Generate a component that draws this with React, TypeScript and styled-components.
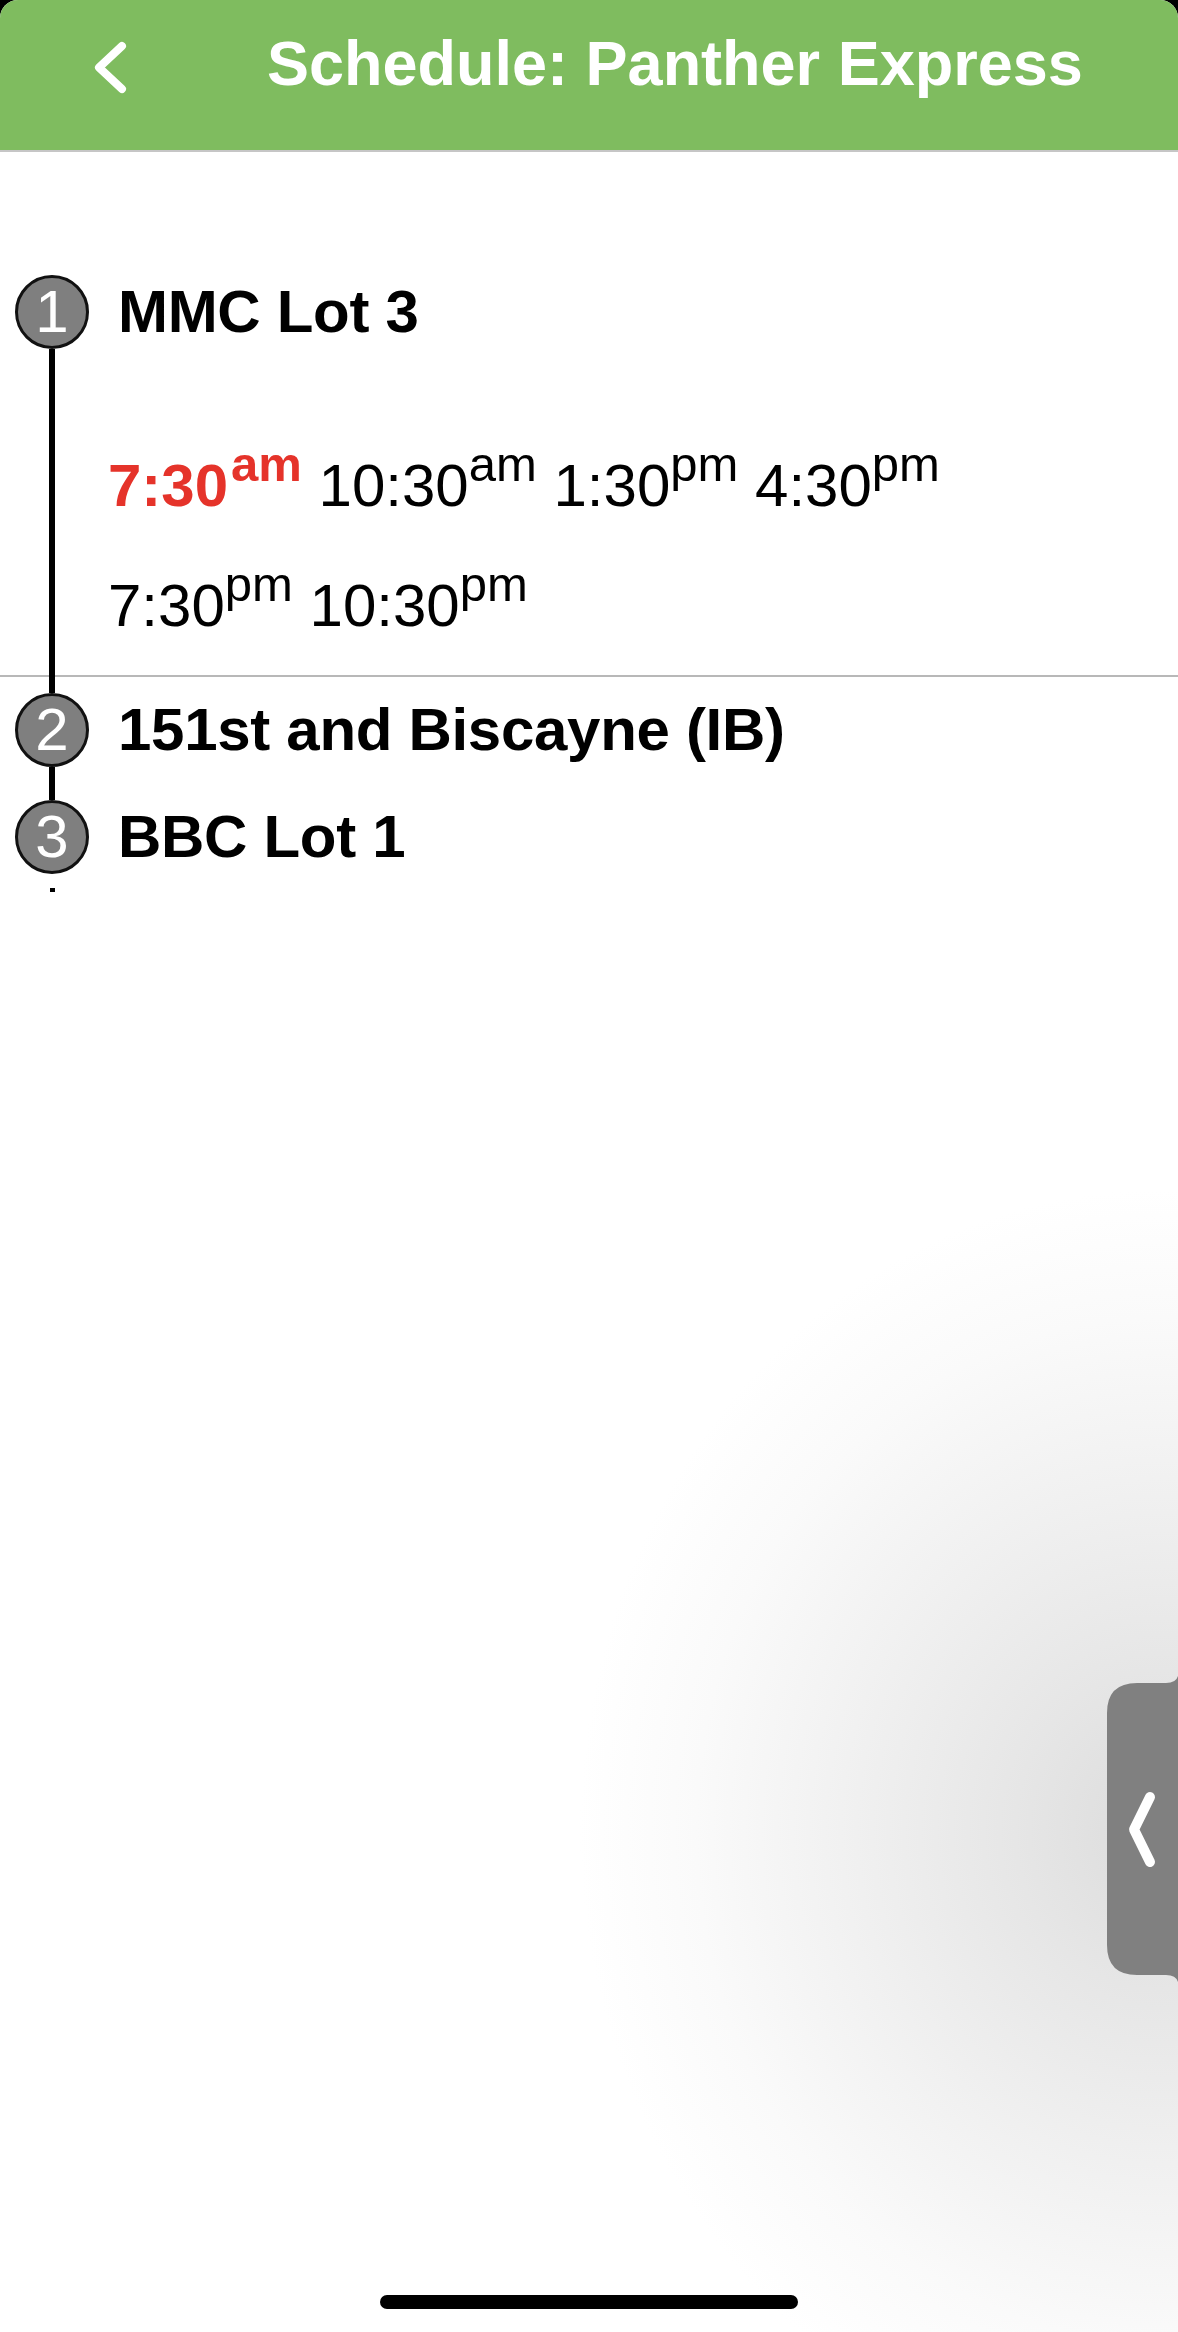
import React from "react";
import styled, { createGlobalStyle } from "styled-components";

const Global = createGlobalStyle`
  html, body {
    margin: 0;
    padding: 0;
    background: #000;
  }
  body {
    font-family: "Liberation Sans", Arial, Helvetica, sans-serif;
    color: #000;
  }
`;

const Screen = styled.div`
  position: relative;
  width: 1178px;
  height: 2332px;
  overflow: hidden;
  border-radius: 18px 18px 0 0;
  background:
    radial-gradient(ellipse 580px 640px at 1160px 1830px,
      #dcdcdc 0%, #e6e6e6 25%, #f1f1f1 55%, #fafafa 80%, #ffffff 100%);
  display: flex;
  flex-direction: column;
`;

const Header = styled.header`
  height: 150px;
  flex: none;
  background: #7fbc5f;
  border-bottom: 2px solid #c6c6c6;
  display: flex;
  align-items: flex-start;
  padding-left: 88px;
  box-sizing: content-box;
`;

const BackButton = styled.button`
  margin-top: 40px;
  width: 44px;
  height: 56px;
  padding: 0;
  border: 0;
  background: transparent;
  display: block;
  svg { display: block; }
`;

const Title = styled.h1`
  margin: 32px 0 0 135px;
  font-size: 63px;
  line-height: 63px;
  font-weight: 700;
  color: #fff;
  white-space: nowrap;
`;

const Timeline = styled.main`
  padding-top: 123px;
  display: flex;
  flex-direction: column;
`;

const Stop = styled.section<{ $divider?: boolean }>`
  display: flex;
  align-items: stretch;
  border-bottom: ${(p) => (p.$divider ? "2px solid #b8b8b8" : "0")};
`;

const MarkerColumn = styled.div`
  width: 104px;
  flex: none;
  display: flex;
  flex-direction: column;
  align-items: flex-start;
`;

const Rail = styled.div<{ $h?: number; $overlap?: boolean }>`
  width: 6px;
  margin-left: 49px;
  background: #000;
  position: relative;
  z-index: 1;
  ${(p) => (p.$h !== undefined ? `height: ${p.$h}px; flex: none;` : "flex: 1;")}
  ${(p) => (p.$overlap ? "margin-bottom: -2px;" : "")}
`;

const Tick = styled.div`
  width: 5px;
  height: 4px;
  margin: 14px 0 0 50px;
  background: #000;
`;

const Badge = styled.div`
  width: 74px;
  height: 74px;
  margin-left: 15px;
  box-sizing: border-box;
  border: 3px solid #111;
  border-radius: 50%;
  background: #7f7f7f;
  color: #fff;
  display: flex;
  align-items: center;
  justify-content: center;
  font-size: 60px;
  line-height: 1;
  flex: none;
`;

const Body = styled.div<{ $top?: number; $bottom?: number }>`
  flex: 1;
  display: flex;
  flex-direction: column;
  padding-top: ${(p) => p.$top ?? 0}px;
  padding-bottom: ${(p) => p.$bottom ?? 0}px;
`;

const Name = styled.h2`
  margin: 0 0 0 14px;
  height: 74px;
  display: flex;
  align-items: center;
  font-size: 60px;
  line-height: 60px;
  font-weight: 700;
  letter-spacing: -0.3px;
  white-space: nowrap;
`;

const Times = styled.div`
  margin: 77px 0 0 4px;
  padding-bottom: 9px;
  display: flex;
  flex-direction: column;
`;

const TimeRow = styled.div`
  font-size: 60px;
  line-height: 120px;
  height: 120px;
  white-space: nowrap;
`;

const Time = styled.span<{ $next?: boolean }>`
  color: ${(p) => (p.$next ? "#e5332a" : "#000")};
  font-weight: ${(p) => (p.$next ? 700 : 400)};
`;

const Meridiem = styled.span<{ $next?: boolean }>`
  font-size: 49px;
  line-height: 1;
  vertical-align: 25px;
  margin-left: ${(p) => (p.$next ? "3px" : "0")};
`;

const Handle = styled.button`
  position: absolute;
  left: 1104px;
  top: 1676px;
  width: 74px;
  height: 306px;
  padding: 0;
  border: 0;
  background: transparent;
  svg { display: block; }
`;

const HomeIndicator = styled.div`
  position: absolute;
  left: calc(50% - 209px);
  top: 2295px;
  width: 418px;
  height: 14px;
  border-radius: 7px;
  background: #000;
`;

type T = { t: string; m: "am" | "pm"; next?: boolean };

const rows: T[][] = [
  [
    { t: "7:30", m: "am", next: true },
    { t: "10:30", m: "am" },
    { t: "1:30", m: "pm" },
    { t: "4:30", m: "pm" },
  ],
  [
    { t: "7:30", m: "pm" },
    { t: "10:30", m: "pm" },
  ],
];

export default function App() {
  return (
    <>
      <Global />
      <Screen>
        <Header>
          <BackButton aria-label="Back">
            <svg width="44" height="56" viewBox="0 0 44 56">
              <path
                d="M34 6 L11 27.5 L34 49"
                fill="none"
                stroke="#fff"
                strokeWidth="8"
                strokeLinecap="round"
                strokeLinejoin="round"
              />
            </svg>
          </BackButton>
          <Title>Schedule: Panther Express</Title>
        </Header>

        <Timeline>
          <Stop $divider>
            <MarkerColumn>
              <Badge>1</Badge>
              <Rail $overlap />
            </MarkerColumn>
            <Body>
              <Name>MMC Lot 3</Name>
              <Times>
                {rows.map((row, i) => (
                  <TimeRow key={i}>
                    {row.map((x, j) => (
                      <React.Fragment key={j}>
                        {j > 0 ? " " : ""}
                        <Time $next={x.next}>
                          {x.t}
                          <Meridiem $next={x.next}>{x.m}</Meridiem>
                        </Time>
                      </React.Fragment>
                    ))}
                  </TimeRow>
                ))}
              </Times>
            </Body>
          </Stop>

          <Stop>
            <MarkerColumn>
              <Rail $h={16} />
              <Badge>2</Badge>
              <Rail />
            </MarkerColumn>
            <Body $top={16} $bottom={33}>
              <Name>151st and Biscayne (IB)</Name>
            </Body>
          </Stop>

          <Stop>
            <MarkerColumn>
              <Badge>3</Badge>
              <Tick />
            </MarkerColumn>
            <Body>
              <Name>BBC Lot 1</Name>
            </Body>
          </Stop>
        </Timeline>

        <Handle aria-label="Open panel">
          <svg width="74" height="306" viewBox="0 0 74 306">
            <path
              d="M74 0 Q72 7 62 7 L33 7 Q3 7 3 37 L3 269 Q3 299 33 299 L62 299 Q72 299 74 306 Z"
              fill="#808080"
            />
            <path
              d="M46 121 L30 153.5 L46 186"
              fill="none"
              stroke="#fff"
              strokeWidth="10"
              strokeLinecap="round"
              strokeLinejoin="round"
            />
          </svg>
        </Handle>

        <HomeIndicator />
      </Screen>
    </>
  );
}
